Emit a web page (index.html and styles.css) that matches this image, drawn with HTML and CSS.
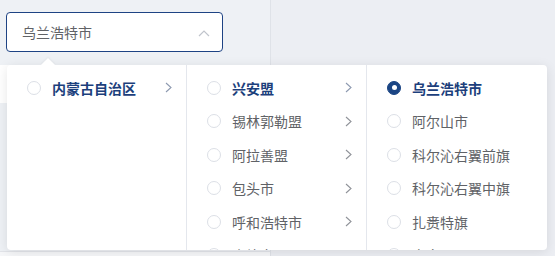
FILE: index.html
```html
<!DOCTYPE html>
<html lang="zh">
<head>
<meta charset="utf-8">
<link rel="stylesheet" href="styles.css">
</head>
<body>
<div class="page">
  <div class="side">
    <div class="select">
      <span class="select-text">乌兰浩特市</span>
      <svg class="caret" width="12" height="7" viewBox="0 0 12 7"><path d="M1 6 L6 1 L11 6" fill="none" stroke="#c0c4cc" stroke-width="1.2"/></svg>
    </div>
    <div class="strip"></div>
    <div class="filler"></div>
    <div class="strip bottom"></div>
  </div>
  <div class="main"></div>
</div>

<div class="popup">
  <span class="pointer"></span>
  <div class="panel">
    <ul class="col">
      <li class="row active"><span class="radio"></span><span class="label">内蒙古自治区</span><svg class="arrow" width="7" height="11" viewBox="0 0 7 11"><path d="M1 1 L6 5.5 L1 10" fill="none" stroke="#8d99b0" stroke-width="1.1"/></svg></li>
    </ul>
    <ul class="col">
      <li class="row active"><span class="radio"></span><span class="label">兴安盟</span><svg class="arrow" width="7" height="11" viewBox="0 0 7 11"><path d="M1 1 L6 5.5 L1 10" fill="none" stroke="#8d99b0" stroke-width="1.1"/></svg></li>
      <li class="row"><span class="radio"></span><span class="label">锡林郭勒盟</span><svg class="arrow" width="7" height="11" viewBox="0 0 7 11"><path d="M1 1 L6 5.5 L1 10" fill="none" stroke="#909399" stroke-width="1.1"/></svg></li>
      <li class="row"><span class="radio"></span><span class="label">阿拉善盟</span><svg class="arrow" width="7" height="11" viewBox="0 0 7 11"><path d="M1 1 L6 5.5 L1 10" fill="none" stroke="#909399" stroke-width="1.1"/></svg></li>
      <li class="row"><span class="radio"></span><span class="label">包头市</span><svg class="arrow" width="7" height="11" viewBox="0 0 7 11"><path d="M1 1 L6 5.5 L1 10" fill="none" stroke="#909399" stroke-width="1.1"/></svg></li>
      <li class="row"><span class="radio"></span><span class="label">呼和浩特市</span><svg class="arrow" width="7" height="11" viewBox="0 0 7 11"><path d="M1 1 L6 5.5 L1 10" fill="none" stroke="#909399" stroke-width="1.1"/></svg></li>
      <li class="row"><span class="radio"></span><span class="label">赤峰市</span><svg class="arrow" width="7" height="11" viewBox="0 0 7 11"><path d="M1 1 L6 5.5 L1 10" fill="none" stroke="#909399" stroke-width="1.1"/></svg></li>
    </ul>
    <ul class="col last">
      <li class="row active"><span class="radio checked"></span><span class="label">乌兰浩特市</span></li>
      <li class="row"><span class="radio"></span><span class="label">阿尔山市</span></li>
      <li class="row"><span class="radio"></span><span class="label">科尔沁右翼前旗</span></li>
      <li class="row"><span class="radio"></span><span class="label">科尔沁右翼中旗</span></li>
      <li class="row"><span class="radio"></span><span class="label">扎赉特旗</span></li>
      <li class="row"><span class="radio"></span><span class="label">突泉县</span></li>
    </ul>
  </div>
</div>
</body>
</html>
```

FILE: styles.css
```css
* { box-sizing: border-box; }
html, body { margin: 0; padding: 0; }
body {
  width: 555px;
  height: 256px;
  overflow: hidden;
  background: #eceef2;
  font-family: "Noto Sans CJK SC", "Noto Sans", sans-serif;
  position: relative;
}
.page {
  display: flex;
  height: 256px;
}
.side {
  width: 271px;
  background: #eef1f5;
  border-right: 1px solid #dfe2e8;
  padding-top: 12px;
  display: flex;
  flex-direction: column;
}
.main {
  flex: 1;
  background: #eceef3;
}
.select {
  margin-left: 6px;
  width: 217px;
  height: 40px;
  border: 1px solid #1e4384;
  border-radius: 4px;
  background: #fff;
  display: flex;
  align-items: center;
  justify-content: space-between;
  padding: 0 12px 0 15px;
}
.select-text {
  font-size: 14px;
  color: #606266;
}
.caret { margin-top: 2px; }
.strip {
  margin-top: 13px;
  height: 38px;
  background: #fff;
}
.filler { flex: 1; }
.strip.bottom {
  margin-top: 0;
  height: 5px;
  background: #f6f7f9;
  border-top: 1px solid #e2e4e9;
}

.popup {
  position: absolute;
  left: 7px;
  top: 65px;
  width: 540px;
  height: 185px;
  background: #fff;
  border-radius: 4px;
  box-shadow: 0 2px 12px rgba(0, 0, 0, 0.1);
}
.pointer {
  position: absolute;
  left: 36px;
  top: -5px;
  width: 10px;
  height: 10px;
  background: #fff;
  transform: rotate(45deg);
  box-shadow: -1px -1px 2px rgba(0, 0, 0, 0.04);
}
.panel {
  position: relative;
  display: flex;
  height: 185px;
  overflow: hidden;
  border-radius: 4px;
}
.col {
  list-style: none;
  margin: 0;
  padding: 6px 0 0;
  width: 180px;
  border-right: 1px solid #e4e7ed;
}
.col.last { border-right: none; }
.row {
  height: 33.5px;
  display: flex;
  align-items: center;
  padding: 0 14px 0 20px;
  font-size: 14px;
  color: #606266;
}
.radio {
  width: 14px;
  height: 14px;
  border: 1px solid #dcdfe6;
  border-radius: 50%;
  flex: none;
  position: relative;
}
.radio.checked {
  background: #1b4584;
  border-color: #1b4584;
}
.radio.checked::after {
  content: "";
  position: absolute;
  left: 50%;
  top: 50%;
  width: 5px;
  height: 5px;
  margin: -2.5px 0 0 -2.5px;
  border-radius: 50%;
  background: #fff;
}
.label {
  margin-left: 11px;
  flex: 1;
  white-space: nowrap;
}
.row.active .label {
  color: #1c3f7c;
  font-weight: 700;
}
.arrow { flex: none; }
```
